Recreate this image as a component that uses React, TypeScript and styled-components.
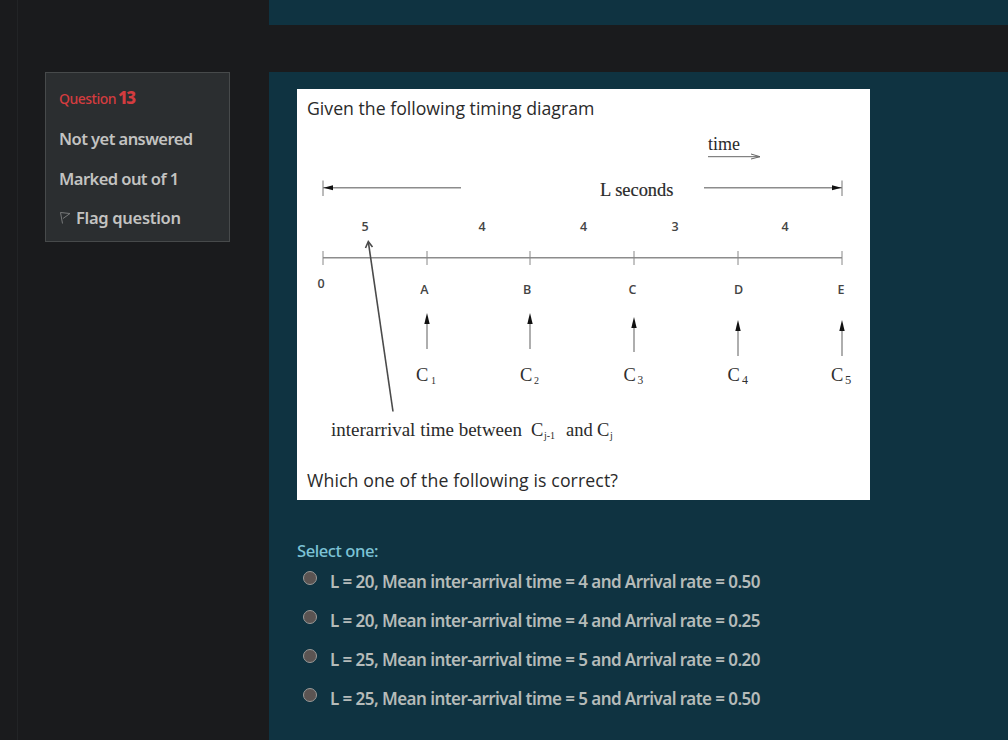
import React from "react";
import styled, { createGlobalStyle } from "styled-components";

const GlobalStyle = createGlobalStyle`
  html, body {
    margin: 0;
    padding: 0;
    background: #1a1b1d;
    font-family: "Noto Sans", "Liberation Sans", sans-serif;
  }
`;

const Page = styled.div`
  display: grid;
  grid-template-columns: 269px 1fr;
  width: 1008px;
  height: 740px;
  overflow: hidden;
`;

const Sidebar = styled.aside`
  padding: 0 0 0 17px;
  background: #1a1b1d;
`;

const SidebarInner = styled.div`
  height: 100%;
  padding: 72px 0 0 27px;
  box-sizing: border-box;
  border-left: 1px solid #222426;
`;

const InfoCard = styled.div`
  box-sizing: border-box;
  width: 185px;
  height: 170px;
  padding: 13px 13px 0;
  display: flex;
  flex-direction: column;
  background: #2b2e30;
  border: 1px solid #474a4b;
`;

const QuestionNo = styled.div`
  height: 24px;
  display: flex;
  align-items: baseline;
  gap: 2px;
  color: #d43c3f;
  font-size: 14px;
  font-weight: 500;
  letter-spacing: -0.5px;
  line-height: 24px;
`;

const QuestionNum = styled.span`
  font-size: 17px;
  font-weight: 800;
  letter-spacing: -1.6px;
`;

const InfoRow = styled.div<{ $first?: boolean; $spacing?: number }>`
  height: 39.5px;
  display: flex;
  align-items: center;
  gap: 5px;
  margin-top: ${(p) => (p.$first ? "9px" : "0")};
  color: #c3c3c1;
  font-size: 16.5px;
  font-weight: 600;
  letter-spacing: ${(p) => p.$spacing ?? -0.55}px;
`;

const Main = styled.main`
  display: flex;
  flex-direction: column;
`;

const TopBand = styled.div`
  height: 25px;
  background: #0f3341;
`;

const DarkBand = styled.div`
  height: 47px;
  background: #1a1b1d;
`;

const Content = styled.section`
  flex: 1;
  padding: 17px 28px 0;
  background: #0f3341;
`;

const QuestionCard = styled.div`
  box-sizing: border-box;
  width: 573px;
  height: 411px;
  display: flex;
  flex-direction: column;
  background: #fff;
  color: #2a2a2a;
`;

const CardText = styled.p<{ $lh: number; $spacing?: number }>`
  margin: 0;
  height: 38px;
  padding-left: 10px;
  font-family: "Open Sans", "Liberation Sans", sans-serif;
  font-size: 17.7px;
  letter-spacing: ${(p) => p.$spacing ?? 0}px;
  line-height: ${(p) => p.$lh}px;
`;

const DiagramSvg = styled.svg`
  display: block;
  width: 573px;
  height: 335px;
`;

const SelectLabel = styled.div`
  margin-top: 40px;
  color: #7cc3d6;
  font-size: 16.6px;
  font-weight: 500;
  letter-spacing: -0.45px;
  line-height: 22px;
`;

const OptionList = styled.div`
  display: flex;
  flex-direction: column;
`;

const Option = styled.label`
  height: 39px;
  display: flex;
  align-items: center;
  gap: 13px;
  padding-left: 6px;
  color: #b5bbb9;
  font-size: 17px;
  font-weight: 600;
  letter-spacing: -0.56px;
`;

const Radio = styled.span`
  box-sizing: border-box;
  flex: none;
  width: 14px;
  height: 14px;
  margin-top: -8px;
  border-radius: 50%;
  background: #5b5452;
  border: 1px solid #9a9a98;
`;

const FlagIcon = () => (
  <svg width="12" height="13" viewBox="0 0 12 13" fill="none">
    <path d="M1.5 1.5 L11 2.5 L4 7.5 M1.5 1.5 L3.5 12.5" stroke="#77797a" strokeWidth="1" />
  </svg>
);

const ticks = [323, 427, 530, 634, 738, 842];
const gaps = [
  { x: 365, v: "5" },
  { x: 482, v: "4" },
  { x: 583.5, v: "4" },
  { x: 675, v: "3" },
  { x: 785, v: "4" },
];
const points = [
  { x: 424.5, lx: 427, v: "A", tip: 313, end: 349 },
  { x: 527, lx: 530, v: "B", tip: 313, end: 349 },
  { x: 632.5, lx: 634, v: "C", tip: 317, end: 352 },
  { x: 738.5, lx: 738, v: "D", tip: 320, end: 356 },
  { x: 841, lx: 842, v: "E", tip: 320, end: 356 },
];
const arrivals = [
  { x: 416, sub: "1", subX: 431, size: 10 },
  { x: 520, sub: "2", subX: 534, size: 10 },
  { x: 623.5, sub: "3", subX: 637.5, size: 11.5 },
  { x: 727.5, sub: "4", subX: 742, size: 12 },
  { x: 831, sub: "5", subX: 845, size: 12.5 },
];

const sansFont = '"Open Sans", sans-serif';
const serifFont = '"Liberation Serif", serif';

// drawn with page coordinates, the viewBox starts where the card's diagram area starts
const Diagram = () => (
  <DiagramSvg viewBox="297 127 573 335">
    <text x="708" y="150" fontFamily={serifFont} fontSize="18" fill="#2a2a2a">time</text>
    <path d="M708 156.7 H760 M751 154 L760 156.7 L751 159" stroke="#666" strokeWidth="1" fill="none" />

    <path d="M323 187.7 H461 M704 187.7 H842" stroke="#8c8c8c" strokeWidth="1.6" />
    <path d="M323 180.5 V196 M842 180.5 V196" stroke="#777" strokeWidth="1" />
    <path d="M323.5 187.7 L333 185.2 V190.2 Z M841.5 187.7 L832 185.2 V190.2 Z" fill="#111" />
    <text x="600" y="195.5" fontFamily={serifFont} fontSize="18.4" fill="#2a2a2a" stroke="#2a2a2a" strokeWidth="0.2">L seconds</text>

    {gaps.map((g) => (
      <text key={g.x} x={g.x} y="230.5" textAnchor="middle" fontFamily={sansFont} fontSize="12.5" fontWeight="600" fill="#444">
        {g.v}
      </text>
    ))}

    <path d="M323 257.7 H842" stroke="#8c8c8c" strokeWidth="1.6" />
    {ticks.map((x) => (
      <path key={x} d={`M${x} 251 V265`} stroke="#888" strokeWidth="1" />
    ))}

    <text x="321" y="287.5" textAnchor="middle" fontFamily={sansFont} fontSize="12.5" fontWeight="600" fill="#444">0</text>
    {points.map((p) => (
      <g key={p.v}>
        <text x={p.x} y="293.5" textAnchor="middle" fontFamily={sansFont} fontSize="12.5" fontWeight="600" fill="#444">
          {p.v}
        </text>
        <path d={`M${p.lx} ${p.tip + 8} V${p.end}`} stroke="#8c8c8c" strokeWidth="1.4" />
        <path d={`M${p.lx} ${p.tip} L${p.lx + 2.7} ${p.tip + 11} H${p.lx - 2.7} Z`} fill="#111" />
      </g>
    ))}

    <path d="M368.5 243 L393 411.5" stroke="#4a4a4a" strokeWidth="1.6" />
    <path d="M365.5 248 L368.3 241.5 L372.5 247" stroke="#4a4a4a" strokeWidth="1.6" fill="none" />

    {arrivals.map((a) => (
      <g key={a.x} fontFamily={serifFont} fill="#2f2f2f">
        <text x={a.x} y="381" fontSize="18.5">C</text>
        <text x={a.subX} y="384" fontSize={a.size}>{a.sub}</text>
      </g>
    ))}

    <g fontFamily={serifFont} fill="#2a2a2a">
      <text x="331" y="435.5" fontSize="19">interarrival time between</text>
      <text x="531" y="435.5" fontSize="18.5">C</text>
      <text x="544" y="439" fontSize="10">j-1</text>
      <text x="566" y="435.5" fontSize="18.5">and</text>
      <text x="597" y="435.5" fontSize="18.5">C</text>
      <text x="610" y="439" fontSize="10">j</text>
    </g>
  </DiagramSvg>
);

const options = [
  "L = 20, Mean inter-arrival time = 4 and Arrival rate = 0.50",
  "L = 20, Mean inter-arrival time = 4 and Arrival rate = 0.25",
  "L = 25, Mean inter-arrival time = 5 and Arrival rate = 0.20",
  "L = 25, Mean inter-arrival time = 5 and Arrival rate = 0.50",
];

const App: React.FC = () => {
  return (
    <Page>
      <GlobalStyle />
      <Sidebar>
        <SidebarInner>
          <InfoCard>
            <QuestionNo>
              Question <QuestionNum>13</QuestionNum>
            </QuestionNo>
            <InfoRow $first>Not yet answered</InfoRow>
            <InfoRow>Marked out of 1</InfoRow>
            <InfoRow $spacing={-0.3}>
              <FlagIcon />
              Flag question
            </InfoRow>
          </InfoCard>
        </SidebarInner>
      </Sidebar>
      <Main>
        <TopBand />
        <DarkBand />
        <Content>
          <QuestionCard>
            <CardText $lh={39}>Given the following timing diagram</CardText>
            <Diagram />
            <CardText $lh={36} $spacing={0.1}>Which one of the following is correct?</CardText>
          </QuestionCard>
          <SelectLabel>Select one:</SelectLabel>
          <OptionList>
            {options.map((o, i) => (
              <Option key={i}>
                <Radio />
                {o}
              </Option>
            ))}
          </OptionList>
        </Content>
      </Main>
    </Page>
  );
};

export default App;
